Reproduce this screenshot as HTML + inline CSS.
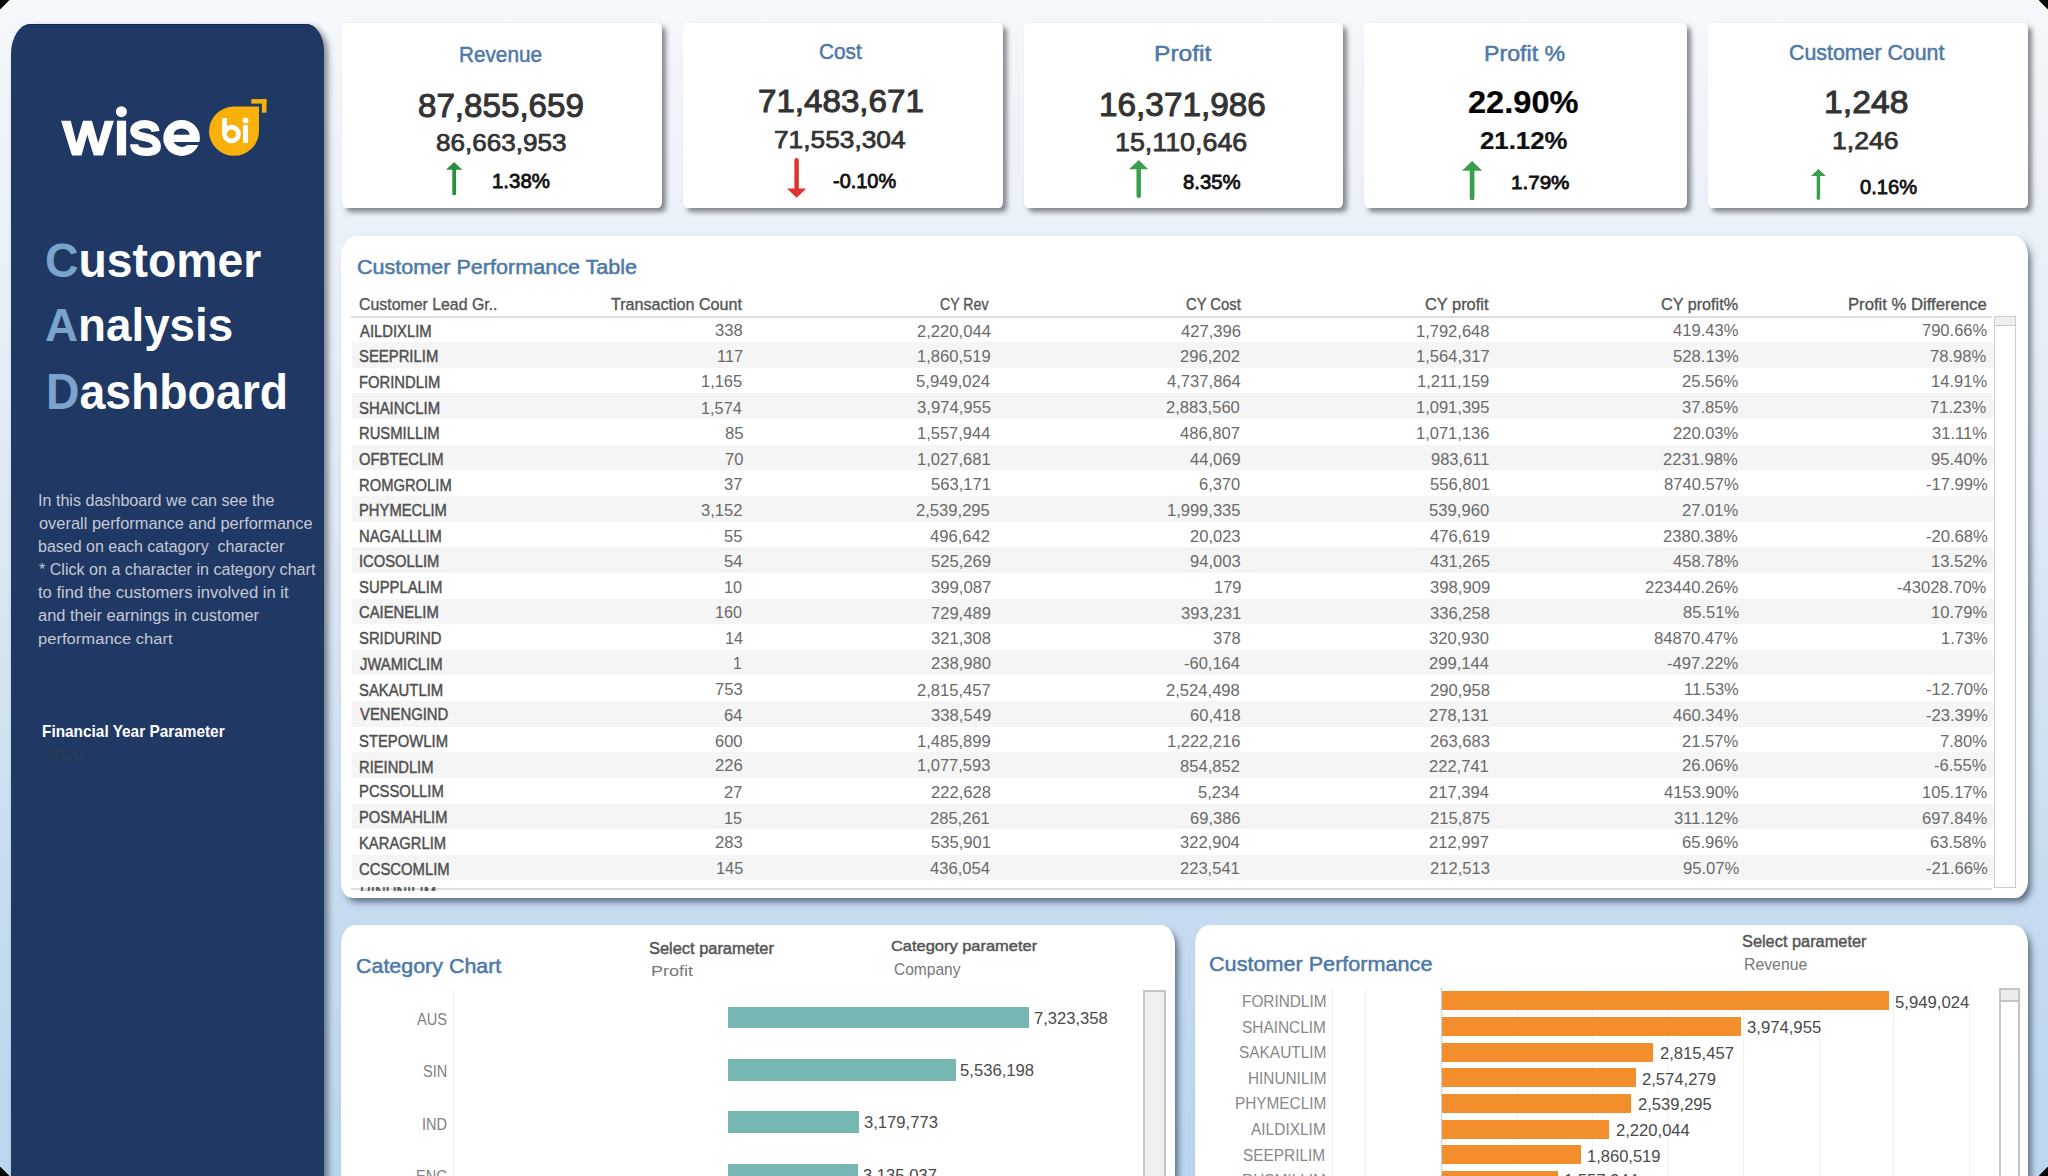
<!DOCTYPE html>
<html><head><meta charset="utf-8"><title>Customer Analysis Dashboard</title>
<style>
html,body{margin:0;padding:0;}
body{width:2048px;height:1176px;overflow:hidden;position:relative;font-family:"Liberation Sans",sans-serif;
background:linear-gradient(to bottom,#f5f8fc 0%,#eef3f9 12%,#e8eff8 25%,#d8e6f4 50%,#c6dbf0 77%,#bad5ee 100%);}
.a{position:absolute;}
.t{position:absolute;white-space:pre;line-height:1;transform-origin:0 0;}
</style></head><body>
<div class="a" style="left:11.00px;top:23.50px;width:312.50px;height:1200.00px;background:#203864;border-radius:20px 18px 0 0 / 30px 27px 0 0;box-shadow:4px 3px 6px rgba(0,0,0,0.45), inset 0 2px 1px -1px #102a58;"></div>
<svg class="a" style="left:0;top:0" width="330" height="200" viewBox="0 0 330 200">
<path fill="#fff" d="M61.1,120.7 L70.8,120.7 L76.4,142.9 L83,120.7 L91.9,120.7 L98.3,142.9 L104.7,120.7 L113.9,120.7 L102.9,155.4 L93.7,155.4 L87.3,134.7 L81.5,155.4 L72,155.4 Z"/>
<rect fill="#fff" x="116.9" y="120.7" width="9.2" height="34.7"/>
<circle fill="#fff" cx="121.4" cy="111.7" r="5.5"/>
<path fill="none" stroke="#fff" stroke-width="8.2" d="M155.6,131.6 C155,126.5 150.5,124.1 145.2,124.1 C139.2,124.1 134.3,126.6 134.3,130.6 C134.3,135.2 140,136.2 146,137.4 C152.5,138.7 156.8,140.8 156.8,146.4 C156.8,150.6 151.6,151.9 145.2,151.9 C138.8,151.9 134.2,149.6 134.2,144.2"/>
<ellipse fill="#fff" cx="181.6" cy="137.95" rx="18.3" ry="17.95"/>
<path fill="#203864" d="M173.5,134.8 A8.1,6.4 0 0 1 189.7,134.8 Z"/>
<path fill="#203864" d="M173.4,142 L200.5,142 L200.5,145.1 L187.3,145.1 C184.5,147.6 177.5,148.2 173.4,142 Z"/>
<path fill="#f7b10a" d="M259,106.6 L259,131.2 A25,24.6 0 1 1 234,106.6 Z"/>
<rect fill="#f7b10a" x="251.3" y="99.1" width="15.2" height="4.5"/>
<rect fill="#f7b10a" x="261.9" y="99.1" width="4.6" height="13.6"/>
<rect fill="#fff" x="222.2" y="118" width="4.7" height="16"/>
<circle fill="none" stroke="#fff" stroke-width="4.7" cx="231.5" cy="134" r="6.95"/>
<rect fill="#fff" x="243" y="125.1" width="5" height="17.7"/>
<circle fill="#fff" cx="245.5" cy="120.5" r="2.9"/>
</svg>
<div class="t" style="left:45.31px;top:236.64px;font-size:48.02px;font-weight:bold;color:#fff;transform:scaleX(0.9650);"><span style="color:#7ba4cd">C</span>ustomer</div>
<div class="t" style="left:44.86px;top:302.51px;font-size:45.34px;font-weight:bold;color:#fff;transform:scaleX(1.0090);"><span style="color:#7ba4cd">A</span>nalysis</div>
<div class="t" style="left:45.51px;top:366.83px;font-size:49.22px;font-weight:bold;color:#fff;transform:scaleX(0.9415);"><span style="color:#7ba4cd">D</span>ashboard</div>
<div class="t" style="left:37.77px;top:492.72px;font-size:15.57px;font-weight:normal;color:#c4c9d4;transform:scaleX(1.0350);">In this dashboard we can see the</div>
<div class="t" style="left:38.78px;top:515.96px;font-size:15.96px;font-weight:normal;color:#c4c9d4;transform:scaleX(1.0283);">overall performance and performance</div>
<div class="t" style="left:38.44px;top:538.86px;font-size:15.57px;font-weight:normal;color:#c4c9d4;transform:scaleX(1.0275);">based on each catagory &nbsp;character</div>
<div class="t" style="left:39.06px;top:561.93px;font-size:15.57px;font-weight:normal;color:#c4c9d4;transform:scaleX(1.0340);">* Click on a character in category chart</div>
<div class="t" style="left:38.29px;top:584.67px;font-size:15.96px;font-weight:normal;color:#c4c9d4;transform:scaleX(1.0431);">to find the customers involved in it</div>
<div class="t" style="left:38.14px;top:607.57px;font-size:15.57px;font-weight:normal;color:#c4c9d4;transform:scaleX(1.0561);">and their earnings in customer</div>
<div class="t" style="left:37.74px;top:631.80px;font-size:14.79px;font-weight:normal;color:#c4c9d4;transform:scaleX(1.1231);">performance chart</div>
<div class="t" style="left:41.61px;top:722.89px;font-size:16.31px;font-weight:bold;color:#fff;transform:scaleX(0.9436);">Financial Year Parameter</div>
<div class="t" style="left:44.72px;top:746.69px;font-size:16.91px;font-weight:normal;color:#2d3a52;transform:scaleX(0.9833);">2020</div>
<div class="a" style="left:342.00px;top:23.00px;width:320.00px;height:185.00px;background:#fff;border-radius:4px / 6px;box-shadow:4px 4px 5px rgba(60,64,70,0.6);"></div>
<div class="a" style="left:683.00px;top:23.00px;width:320.00px;height:185.00px;background:#fff;border-radius:4px / 6px;box-shadow:4px 4px 5px rgba(60,64,70,0.6);"></div>
<div class="a" style="left:1024.00px;top:23.00px;width:319.00px;height:185.00px;background:#fff;border-radius:4px / 6px;box-shadow:4px 4px 5px rgba(60,64,70,0.6);"></div>
<div class="a" style="left:1364.00px;top:23.00px;width:323.00px;height:185.00px;background:#fff;border-radius:4px / 6px;box-shadow:4px 4px 5px rgba(60,64,70,0.6);"></div>
<div class="a" style="left:1708.00px;top:23.00px;width:320.00px;height:185.00px;background:#fff;border-radius:4px / 6px;box-shadow:4px 4px 5px rgba(60,64,70,0.6);"></div>
<div class="t" style="left:459.13px;top:43.71px;font-size:21.84px;font-weight:normal;color:#4e79a7;transform:scaleX(0.9497);-webkit-text-stroke:0.5px #4e79a7;">Revenue</div>
<div class="t" style="left:417.69px;top:89.78px;font-size:32.86px;font-weight:normal;color:#333333;transform:scaleX(1.0089);-webkit-text-stroke:1.0px #333333;">87,855,659</div>
<div class="t" style="left:435.96px;top:130.81px;font-size:23.84px;font-weight:normal;color:#333333;transform:scaleX(1.0938);-webkit-text-stroke:0.75px #333333;">86,663,953</div>
<svg class="a" style="left:446.00px;top:161.60px" width="16.40" height="33.70" viewBox="0 0 16.40 33.70"><path d="M8.20,0 L16.40,7.87 L0,7.87 Z" fill="#28903c"/><line x1="8.20" y1="7.37" x2="8.20" y2="31.81" stroke="#28903c" stroke-width="3.77" stroke-linecap="round"/></svg>
<div class="t" style="left:492.39px;top:171.79px;font-size:19.86px;font-weight:normal;color:#111;transform:scaleX(1.0294);-webkit-text-stroke:0.8px #111;">1.38%</div>
<div class="t" style="left:819.21px;top:39.71px;font-size:22.67px;font-weight:normal;color:#4e79a7;transform:scaleX(0.9180);-webkit-text-stroke:0.5px #4e79a7;">Cost</div>
<div class="t" style="left:757.84px;top:86.73px;font-size:30.79px;font-weight:normal;color:#333333;transform:scaleX(1.0767);-webkit-text-stroke:1.0px #333333;">71,483,671</div>
<div class="t" style="left:774.01px;top:127.70px;font-size:24.09px;font-weight:normal;color:#333333;transform:scaleX(1.0916);-webkit-text-stroke:0.75px #333333;">71,553,304</div>
<svg class="a" style="left:786.50px;top:158.20px" width="19.20" height="39.80" viewBox="0 0 19.20 39.80"><path d="M9.60,39.80 L19.20,30.58 L0,30.58 Z" fill="#e0312f"/><line x1="9.60" y1="2.21" x2="9.60" y2="31.08" stroke="#e0312f" stroke-width="4.42" stroke-linecap="round"/></svg>
<div class="t" style="left:833.20px;top:170.86px;font-size:20.37px;font-weight:normal;color:#111;transform:scaleX(0.9796);-webkit-text-stroke:0.8px #111;">-0.10%</div>
<div class="t" style="left:1153.50px;top:43.86px;font-size:21.42px;font-weight:normal;color:#4e79a7;transform:scaleX(1.1485);-webkit-text-stroke:0.5px #4e79a7;">Profit</div>
<div class="t" style="left:1098.63px;top:87.66px;font-size:33.00px;font-weight:normal;color:#333333;transform:scaleX(1.0105);-webkit-text-stroke:1.0px #333333;">16,371,986</div>
<div class="t" style="left:1114.74px;top:128.64px;font-size:26.17px;font-weight:normal;color:#333333;transform:scaleX(1.0252);-webkit-text-stroke:0.75px #333333;">15,110,646</div>
<svg class="a" style="left:1128.60px;top:160.00px" width="19.40" height="38.00" viewBox="0 0 19.40 38.00"><path d="M9.70,0 L19.40,9.31 L0,9.31 Z" fill="#3a9e4c"/><line x1="9.70" y1="8.81" x2="9.70" y2="35.77" stroke="#3a9e4c" stroke-width="4.46" stroke-linecap="round"/></svg>
<div class="t" style="left:1183.19px;top:172.72px;font-size:19.35px;font-weight:normal;color:#111;transform:scaleX(1.0511);-webkit-text-stroke:0.8px #111;">8.35%</div>
<div class="t" style="left:1483.56px;top:43.86px;font-size:21.42px;font-weight:normal;color:#4e79a7;transform:scaleX(1.0830);-webkit-text-stroke:0.5px #4e79a7;">Profit %</div>
<div class="t" style="left:1468.15px;top:86.87px;font-size:30.62px;font-weight:bold;color:#000;transform:scaleX(1.0640);-webkit-text-stroke:0.2px #000;">22.90%</div>
<div class="t" style="left:1479.68px;top:129.89px;font-size:23.16px;font-weight:bold;color:#111;transform:scaleX(1.1129);-webkit-text-stroke:0.2px #111;">21.12%</div>
<svg class="a" style="left:1461.50px;top:161.00px" width="20.20" height="39.40" viewBox="0 0 20.20 39.40"><path d="M10.10,0 L20.20,9.70 L0,9.70 Z" fill="#3a9e4c"/><line x1="10.10" y1="9.20" x2="10.10" y2="37.08" stroke="#3a9e4c" stroke-width="4.65" stroke-linecap="round"/></svg>
<div class="t" style="left:1511.03px;top:173.74px;font-size:18.26px;font-weight:normal;color:#111;transform:scaleX(1.1292);-webkit-text-stroke:0.8px #111;">1.79%</div>
<div class="t" style="left:1789.08px;top:42.98px;font-size:21.28px;font-weight:normal;color:#4e79a7;transform:scaleX(1.0037);-webkit-text-stroke:0.5px #4e79a7;">Customer Count</div>
<div class="t" style="left:1824.06px;top:85.67px;font-size:32.16px;font-weight:normal;color:#333333;transform:scaleX(1.0493);-webkit-text-stroke:1.0px #333333;">1,248</div>
<div class="t" style="left:1832.14px;top:128.87px;font-size:24.25px;font-weight:normal;color:#333333;transform:scaleX(1.0981);-webkit-text-stroke:0.75px #333333;">1,246</div>
<svg class="a" style="left:1811.20px;top:169.00px" width="14.80" height="30.90" viewBox="0 0 14.80 30.90"><path d="M7.40,0 L14.80,7.10 L0,7.10 Z" fill="#3a9e4c"/><line x1="7.40" y1="6.60" x2="7.40" y2="29.20" stroke="#3a9e4c" stroke-width="3.40" stroke-linecap="round"/></svg>
<div class="t" style="left:1859.64px;top:176.56px;font-size:20.83px;font-weight:normal;color:#111;transform:scaleX(0.9660);-webkit-text-stroke:0.8px #111;">0.16%</div>
<div class="a" style="left:341.00px;top:236.00px;width:1687.00px;height:661.50px;background:#fff;border-radius:15px 14px 13px 11px / 22px 20px 18px 15px;box-shadow:4px 5px 6px -1px rgba(30,45,65,0.62);"></div>
<div class="t" style="left:356.67px;top:257.60px;font-size:19.72px;font-weight:normal;color:#4e79a7;transform:scaleX(1.0945);-webkit-text-stroke:0.5px #4e79a7;">Customer Performance Table</div>
<div class="a" style="left:351.50px;top:342.23px;width:1641.00px;height:25.63px;background:#f5f5f5;"></div>
<div class="a" style="left:351.50px;top:393.49px;width:1641.00px;height:25.63px;background:#f5f5f5;"></div>
<div class="a" style="left:351.50px;top:444.75px;width:1641.00px;height:25.63px;background:#f5f5f5;"></div>
<div class="a" style="left:351.50px;top:496.01px;width:1641.00px;height:25.63px;background:#f5f5f5;"></div>
<div class="a" style="left:351.50px;top:547.27px;width:1641.00px;height:25.63px;background:#f5f5f5;"></div>
<div class="a" style="left:351.50px;top:598.53px;width:1641.00px;height:25.63px;background:#f5f5f5;"></div>
<div class="a" style="left:351.50px;top:649.79px;width:1641.00px;height:25.63px;background:#f5f5f5;"></div>
<div class="a" style="left:351.50px;top:701.05px;width:1641.00px;height:25.63px;background:#f5f5f5;"></div>
<div class="a" style="left:351.50px;top:752.31px;width:1641.00px;height:25.63px;background:#f5f5f5;"></div>
<div class="a" style="left:351.50px;top:803.57px;width:1641.00px;height:25.63px;background:#f5f5f5;"></div>
<div class="a" style="left:351.50px;top:854.83px;width:1641.00px;height:25.63px;background:#f5f5f5;"></div>
<div class="a" style="left:351.00px;top:316.30px;width:1641.00px;height:1.50px;background:#dddddd;"></div>
<div class="a" style="left:351.00px;top:888.20px;width:1641.00px;height:1.80px;background:#dcdcdc;"></div>
<div class="a" style="left:1994.20px;top:315.80px;width:21.70px;height:572.70px;border:1.2px solid #cccccc;background:#fff;box-sizing:border-box;"></div>
<div class="a" style="left:1995.40px;top:317.00px;width:19.30px;height:9.40px;background:#efefef;border-bottom:1.2px solid #c8c8c8;box-sizing:border-box;"></div>
<div class="t" style="left:359.22px;top:296.77px;font-size:15.62px;font-weight:normal;color:#555555;transform:scaleX(1.0168);-webkit-text-stroke:0.35px #555555;">Customer Lead Gr..</div>
<div class="t" style="left:611.04px;top:296.77px;font-size:15.62px;font-weight:normal;color:#555555;transform:scaleX(1.0313);-webkit-text-stroke:0.35px #555555;">Transaction Count</div>
<div class="t" style="left:940.46px;top:295.93px;font-size:16.03px;font-weight:normal;color:#555555;transform:scaleX(0.8830);-webkit-text-stroke:0.35px #555555;">CY Rev</div>
<div class="t" style="left:1186.28px;top:295.93px;font-size:16.03px;font-weight:normal;color:#555555;transform:scaleX(0.9225);-webkit-text-stroke:0.35px #555555;">CY Cost</div>
<div class="t" style="left:1425.12px;top:295.93px;font-size:16.03px;font-weight:normal;color:#555555;transform:scaleX(1.0236);-webkit-text-stroke:0.35px #555555;">CY profit</div>
<div class="t" style="left:1660.94px;top:296.73px;font-size:16.85px;font-weight:normal;color:#555555;transform:scaleX(0.9610);-webkit-text-stroke:0.35px #555555;">CY profit%</div>
<div class="t" style="left:1847.79px;top:296.77px;font-size:15.62px;font-weight:normal;color:#555555;transform:scaleX(1.0683);-webkit-text-stroke:0.35px #555555;">Profit % Difference</div>
<div class="t" style="left:360.20px;top:322.50px;font-size:16.30px;font-weight:normal;color:#505050;transform:scaleX(0.9097);-webkit-text-stroke:0.45px #505050;">AILDIXLIM</div>
<div class="t" style="left:714.68px;top:321.73px;font-size:17.21px;font-weight:normal;color:#6a6a6a;transform:scaleX(0.9656);">338</div>
<div class="t" style="left:916.77px;top:322.73px;font-size:17.21px;font-weight:normal;color:#6a6a6a;transform:scaleX(0.9664);">2,220,044</div>
<div class="t" style="left:1180.94px;top:322.73px;font-size:17.21px;font-weight:normal;color:#6a6a6a;transform:scaleX(0.9668);">427,396</div>
<div class="t" style="left:1415.99px;top:322.73px;font-size:17.21px;font-weight:normal;color:#6a6a6a;transform:scaleX(0.9601);">1,792,648</div>
<div class="t" style="left:1672.89px;top:321.73px;font-size:17.21px;font-weight:normal;color:#6a6a6a;transform:scaleX(0.9634);">419.43%</div>
<div class="t" style="left:1921.57px;top:321.73px;font-size:17.21px;font-weight:normal;color:#6a6a6a;transform:scaleX(0.9610);">790.66%</div>
<div class="t" style="left:358.90px;top:347.63px;font-size:16.30px;font-weight:normal;color:#505050;transform:scaleX(0.9126);-webkit-text-stroke:0.45px #505050;">SEEPRILIM</div>
<div class="t" style="left:716.65px;top:347.86px;font-size:17.21px;font-weight:normal;color:#6a6a6a;transform:scaleX(0.9518);">117</div>
<div class="t" style="left:917.18px;top:347.86px;font-size:17.21px;font-weight:normal;color:#6a6a6a;transform:scaleX(0.9633);">1,860,519</div>
<div class="t" style="left:1180.38px;top:347.86px;font-size:17.21px;font-weight:normal;color:#6a6a6a;transform:scaleX(0.9634);">296,202</div>
<div class="t" style="left:1416.33px;top:347.86px;font-size:17.21px;font-weight:normal;color:#6a6a6a;transform:scaleX(0.9628);">1,564,317</div>
<div class="t" style="left:1672.56px;top:347.86px;font-size:17.21px;font-weight:normal;color:#6a6a6a;transform:scaleX(0.9682);">528.13%</div>
<div class="t" style="left:1930.32px;top:347.86px;font-size:17.21px;font-weight:normal;color:#6a6a6a;transform:scaleX(0.9666);">78.98%</div>
<div class="t" style="left:358.97px;top:373.76px;font-size:16.30px;font-weight:normal;color:#505050;transform:scaleX(0.9080);-webkit-text-stroke:0.45px #505050;">FORINDLIM</div>
<div class="t" style="left:700.99px;top:373.49px;font-size:17.21px;font-weight:normal;color:#6a6a6a;transform:scaleX(0.9559);">1,165</div>
<div class="t" style="left:916.27px;top:373.49px;font-size:17.21px;font-weight:normal;color:#6a6a6a;transform:scaleX(0.9696);">5,949,024</div>
<div class="t" style="left:1166.62px;top:373.49px;font-size:17.21px;font-weight:normal;color:#6a6a6a;transform:scaleX(0.9653);">4,737,864</div>
<div class="t" style="left:1416.92px;top:373.49px;font-size:17.21px;font-weight:normal;color:#6a6a6a;transform:scaleX(0.9614);">1,211,159</div>
<div class="t" style="left:1681.80px;top:373.49px;font-size:17.21px;font-weight:normal;color:#6a6a6a;transform:scaleX(0.9669);">25.56%</div>
<div class="t" style="left:1930.82px;top:373.49px;font-size:17.21px;font-weight:normal;color:#6a6a6a;transform:scaleX(0.9623);">14.91%</div>
<div class="t" style="left:358.89px;top:399.89px;font-size:16.30px;font-weight:normal;color:#505050;transform:scaleX(0.9141);-webkit-text-stroke:0.45px #505050;">SHAINCLIM</div>
<div class="t" style="left:701.34px;top:399.62px;font-size:17.21px;font-weight:normal;color:#6a6a6a;transform:scaleX(0.9503);">1,574</div>
<div class="t" style="left:917.01px;top:398.62px;font-size:17.21px;font-weight:normal;color:#6a6a6a;transform:scaleX(0.9681);">3,974,955</div>
<div class="t" style="left:1166.26px;top:398.62px;font-size:17.21px;font-weight:normal;color:#6a6a6a;transform:scaleX(0.9659);">2,883,560</div>
<div class="t" style="left:1415.94px;top:398.62px;font-size:17.21px;font-weight:normal;color:#6a6a6a;transform:scaleX(0.9603);">1,091,395</div>
<div class="t" style="left:1682.42px;top:398.62px;font-size:17.21px;font-weight:normal;color:#6a6a6a;transform:scaleX(0.9652);">37.85%</div>
<div class="t" style="left:1930.32px;top:398.62px;font-size:17.21px;font-weight:normal;color:#6a6a6a;transform:scaleX(0.9666);">71.23%</div>
<div class="t" style="left:358.97px;top:424.52px;font-size:16.30px;font-weight:normal;color:#505050;transform:scaleX(0.9087);-webkit-text-stroke:0.45px #505050;">RUSMILLIM</div>
<div class="t" style="left:724.60px;top:424.75px;font-size:17.21px;font-weight:normal;color:#6a6a6a;transform:scaleX(0.9700);">85</div>
<div class="t" style="left:917.29px;top:424.75px;font-size:17.21px;font-weight:normal;color:#6a6a6a;transform:scaleX(0.9599);">1,557,944</div>
<div class="t" style="left:1180.24px;top:424.75px;font-size:17.21px;font-weight:normal;color:#6a6a6a;transform:scaleX(0.9657);">486,807</div>
<div class="t" style="left:1416.04px;top:424.75px;font-size:17.21px;font-weight:normal;color:#6a6a6a;transform:scaleX(0.9600);">1,071,136</div>
<div class="t" style="left:1673.04px;top:424.75px;font-size:17.21px;font-weight:normal;color:#6a6a6a;transform:scaleX(0.9614);">220.03%</div>
<div class="t" style="left:1931.61px;top:424.75px;font-size:17.21px;font-weight:normal;color:#6a6a6a;transform:scaleX(0.9624);">31.11%</div>
<div class="t" style="left:359.06px;top:450.65px;font-size:16.30px;font-weight:normal;color:#505050;transform:scaleX(0.9091);-webkit-text-stroke:0.45px #505050;">OFBTECLIM</div>
<div class="t" style="left:724.62px;top:450.88px;font-size:17.21px;font-weight:normal;color:#6a6a6a;transform:scaleX(0.9643);">70</div>
<div class="t" style="left:917.28px;top:450.88px;font-size:17.21px;font-weight:normal;color:#6a6a6a;transform:scaleX(0.9625);">1,027,681</div>
<div class="t" style="left:1189.85px;top:450.88px;font-size:17.21px;font-weight:normal;color:#6a6a6a;transform:scaleX(0.9623);">44,069</div>
<div class="t" style="left:1431.02px;top:450.88px;font-size:17.21px;font-weight:normal;color:#6a6a6a;transform:scaleX(0.9608);">983,611</div>
<div class="t" style="left:1663.33px;top:450.88px;font-size:17.21px;font-weight:normal;color:#6a6a6a;transform:scaleX(0.9640);">2231.98%</div>
<div class="t" style="left:1931.25px;top:450.88px;font-size:17.21px;font-weight:normal;color:#6a6a6a;transform:scaleX(0.9676);">95.40%</div>
<div class="t" style="left:358.97px;top:476.78px;font-size:16.30px;font-weight:normal;color:#505050;transform:scaleX(0.9071);-webkit-text-stroke:0.45px #505050;">ROMGROLIM</div>
<div class="t" style="left:723.77px;top:475.51px;font-size:17.21px;font-weight:normal;color:#6a6a6a;transform:scaleX(0.9562);">37</div>
<div class="t" style="left:930.84px;top:475.51px;font-size:17.21px;font-weight:normal;color:#6a6a6a;transform:scaleX(0.9671);">563,171</div>
<div class="t" style="left:1199.30px;top:475.51px;font-size:17.21px;font-weight:normal;color:#6a6a6a;transform:scaleX(0.9569);">6,370</div>
<div class="t" style="left:1429.84px;top:475.51px;font-size:17.21px;font-weight:normal;color:#6a6a6a;transform:scaleX(0.9671);">556,801</div>
<div class="t" style="left:1664.19px;top:475.51px;font-size:17.21px;font-weight:normal;color:#6a6a6a;transform:scaleX(0.9656);">8740.57%</div>
<div class="t" style="left:1925.60px;top:475.51px;font-size:17.21px;font-weight:normal;color:#6a6a6a;transform:scaleX(0.9664);">-17.99%</div>
<div class="t" style="left:358.97px;top:501.91px;font-size:16.30px;font-weight:normal;color:#505050;transform:scaleX(0.9075);-webkit-text-stroke:0.45px #505050;">PHYMECLIM</div>
<div class="t" style="left:701.48px;top:501.64px;font-size:17.21px;font-weight:normal;color:#6a6a6a;transform:scaleX(0.9639);">3,152</div>
<div class="t" style="left:916.41px;top:501.64px;font-size:17.21px;font-weight:normal;color:#6a6a6a;transform:scaleX(0.9656);">2,539,295</div>
<div class="t" style="left:1166.94px;top:501.64px;font-size:17.21px;font-weight:normal;color:#6a6a6a;transform:scaleX(0.9603);">1,999,335</div>
<div class="t" style="left:1429.34px;top:501.64px;font-size:17.21px;font-weight:normal;color:#6a6a6a;transform:scaleX(0.9682);">539,960</div>
<div class="t" style="left:1681.80px;top:501.64px;font-size:17.21px;font-weight:normal;color:#6a6a6a;transform:scaleX(0.9669);">27.01%</div>
<div class="t" style="left:358.97px;top:527.54px;font-size:16.30px;font-weight:normal;color:#505050;transform:scaleX(0.9068);-webkit-text-stroke:0.45px #505050;">NAGALLLIM</div>
<div class="t" style="left:724.28px;top:527.77px;font-size:17.21px;font-weight:normal;color:#6a6a6a;transform:scaleX(0.9559);">55</div>
<div class="t" style="left:930.24px;top:527.77px;font-size:17.21px;font-weight:normal;color:#6a6a6a;transform:scaleX(0.9657);">496,642</div>
<div class="t" style="left:1189.85px;top:527.77px;font-size:17.21px;font-weight:normal;color:#6a6a6a;transform:scaleX(0.9612);">20,023</div>
<div class="t" style="left:1430.09px;top:527.77px;font-size:17.21px;font-weight:normal;color:#6a6a6a;transform:scaleX(0.9657);">476,619</div>
<div class="t" style="left:1663.33px;top:527.77px;font-size:17.21px;font-weight:normal;color:#6a6a6a;transform:scaleX(0.9640);">2380.38%</div>
<div class="t" style="left:1925.60px;top:527.77px;font-size:17.21px;font-weight:normal;color:#6a6a6a;transform:scaleX(0.9664);">-20.68%</div>
<div class="t" style="left:358.73px;top:552.67px;font-size:16.30px;font-weight:normal;color:#505050;transform:scaleX(0.9067);-webkit-text-stroke:0.45px #505050;">ICOSOLLIM</div>
<div class="t" style="left:723.62px;top:552.90px;font-size:17.21px;font-weight:normal;color:#6a6a6a;transform:scaleX(0.9671);">54</div>
<div class="t" style="left:930.74px;top:552.90px;font-size:17.21px;font-weight:normal;color:#6a6a6a;transform:scaleX(0.9677);">525,269</div>
<div class="t" style="left:1189.80px;top:552.90px;font-size:17.21px;font-weight:normal;color:#6a6a6a;transform:scaleX(0.9621);">94,003</div>
<div class="t" style="left:1429.84px;top:552.90px;font-size:17.21px;font-weight:normal;color:#6a6a6a;transform:scaleX(0.9666);">431,265</div>
<div class="t" style="left:1672.89px;top:552.90px;font-size:17.21px;font-weight:normal;color:#6a6a6a;transform:scaleX(0.9634);">458.78%</div>
<div class="t" style="left:1930.82px;top:552.90px;font-size:17.21px;font-weight:normal;color:#6a6a6a;transform:scaleX(0.9623);">13.52%</div>
<div class="t" style="left:358.90px;top:578.80px;font-size:16.30px;font-weight:normal;color:#505050;transform:scaleX(0.9120);-webkit-text-stroke:0.45px #505050;">SUPPLALIM</div>
<div class="t" style="left:724.13px;top:578.53px;font-size:17.21px;font-weight:normal;color:#6a6a6a;transform:scaleX(0.9427);">10</div>
<div class="t" style="left:930.98px;top:578.53px;font-size:17.21px;font-weight:normal;color:#6a6a6a;transform:scaleX(0.9693);">399,087</div>
<div class="t" style="left:1213.80px;top:578.53px;font-size:17.21px;font-weight:normal;color:#6a6a6a;transform:scaleX(0.9569);">179</div>
<div class="t" style="left:1429.83px;top:578.53px;font-size:17.21px;font-weight:normal;color:#6a6a6a;transform:scaleX(0.9696);">398,909</div>
<div class="t" style="left:1644.90px;top:578.53px;font-size:17.21px;font-weight:normal;color:#6a6a6a;transform:scaleX(0.9656);">223440.26%</div>
<div class="t" style="left:1897.41px;top:578.53px;font-size:17.21px;font-weight:normal;color:#6a6a6a;transform:scaleX(0.9637);">-43028.70%</div>
<div class="t" style="left:358.94px;top:604.43px;font-size:16.30px;font-weight:normal;color:#505050;transform:scaleX(0.9090);-webkit-text-stroke:0.45px #505050;">CAIENELIM</div>
<div class="t" style="left:715.42px;top:603.66px;font-size:17.21px;font-weight:normal;color:#6a6a6a;transform:scaleX(0.9392);">160</div>
<div class="t" style="left:931.26px;top:604.66px;font-size:17.21px;font-weight:normal;color:#6a6a6a;transform:scaleX(0.9631);">729,489</div>
<div class="t" style="left:1180.93px;top:604.66px;font-size:17.21px;font-weight:normal;color:#6a6a6a;transform:scaleX(0.9687);">393,231</div>
<div class="t" style="left:1429.66px;top:604.66px;font-size:17.21px;font-weight:normal;color:#6a6a6a;transform:scaleX(0.9665);">336,258</div>
<div class="t" style="left:1682.66px;top:603.66px;font-size:17.21px;font-weight:normal;color:#6a6a6a;transform:scaleX(0.9630);">85.51%</div>
<div class="t" style="left:1930.82px;top:603.66px;font-size:17.21px;font-weight:normal;color:#6a6a6a;transform:scaleX(0.9623);">10.79%</div>
<div class="t" style="left:358.90px;top:629.56px;font-size:16.30px;font-weight:normal;color:#505050;transform:scaleX(0.9108);-webkit-text-stroke:0.45px #505050;">SRIDURIND</div>
<div class="t" style="left:724.63px;top:629.79px;font-size:17.21px;font-weight:normal;color:#6a6a6a;transform:scaleX(0.9452);">14</div>
<div class="t" style="left:930.66px;top:629.79px;font-size:17.21px;font-weight:normal;color:#6a6a6a;transform:scaleX(0.9665);">321,308</div>
<div class="t" style="left:1212.68px;top:629.79px;font-size:17.21px;font-weight:normal;color:#6a6a6a;transform:scaleX(0.9656);">378</div>
<div class="t" style="left:1429.43px;top:629.79px;font-size:17.21px;font-weight:normal;color:#6a6a6a;transform:scaleX(0.9670);">320,930</div>
<div class="t" style="left:1654.47px;top:629.79px;font-size:17.21px;font-weight:normal;color:#6a6a6a;transform:scaleX(0.9665);">84870.47%</div>
<div class="t" style="left:1940.53px;top:629.79px;font-size:17.21px;font-weight:normal;color:#6a6a6a;transform:scaleX(0.9603);">1.73%</div>
<div class="t" style="left:359.86px;top:655.69px;font-size:16.30px;font-weight:normal;color:#505050;transform:scaleX(0.9091);-webkit-text-stroke:0.45px #505050;">JWAMICLIM</div>
<div class="t" style="left:733.39px;top:655.42px;font-size:17.21px;font-weight:normal;color:#6a6a6a;transform:scaleX(0.9107);">1</div>
<div class="t" style="left:930.84px;top:655.42px;font-size:17.21px;font-weight:normal;color:#6a6a6a;transform:scaleX(0.9645);">238,980</div>
<div class="t" style="left:1184.40px;top:655.42px;font-size:17.21px;font-weight:normal;color:#6a6a6a;transform:scaleX(0.9589);">-60,164</div>
<div class="t" style="left:1429.34px;top:655.42px;font-size:17.21px;font-weight:normal;color:#6a6a6a;transform:scaleX(0.9641);">299,144</div>
<div class="t" style="left:1667.33px;top:655.42px;font-size:17.21px;font-weight:normal;color:#6a6a6a;transform:scaleX(0.9677);">-497.22%</div>
<div class="t" style="left:358.90px;top:681.82px;font-size:16.30px;font-weight:normal;color:#505050;transform:scaleX(0.9118);-webkit-text-stroke:0.45px #505050;">SAKAUTLIM</div>
<div class="t" style="left:715.15px;top:680.55px;font-size:17.21px;font-weight:normal;color:#6a6a6a;transform:scaleX(0.9660);">753</div>
<div class="t" style="left:916.81px;top:681.55px;font-size:17.21px;font-weight:normal;color:#6a6a6a;transform:scaleX(0.9637);">2,815,457</div>
<div class="t" style="left:1166.46px;top:681.55px;font-size:17.21px;font-weight:normal;color:#6a6a6a;transform:scaleX(0.9656);">2,524,498</div>
<div class="t" style="left:1430.03px;top:681.55px;font-size:17.21px;font-weight:normal;color:#6a6a6a;transform:scaleX(0.9646);">290,958</div>
<div class="t" style="left:1684.01px;top:680.55px;font-size:17.21px;font-weight:normal;color:#6a6a6a;transform:scaleX(0.9614);">11.53%</div>
<div class="t" style="left:1925.60px;top:680.55px;font-size:17.21px;font-weight:normal;color:#6a6a6a;transform:scaleX(0.9664);">-12.70%</div>
<div class="t" style="left:360.11px;top:706.45px;font-size:16.30px;font-weight:normal;color:#505050;transform:scaleX(0.9117);-webkit-text-stroke:0.45px #505050;">VENENGIND</div>
<div class="t" style="left:724.08px;top:706.68px;font-size:17.21px;font-weight:normal;color:#6a6a6a;transform:scaleX(0.9682);">64</div>
<div class="t" style="left:930.83px;top:706.68px;font-size:17.21px;font-weight:normal;color:#6a6a6a;transform:scaleX(0.9696);">338,549</div>
<div class="t" style="left:1189.76px;top:706.68px;font-size:17.21px;font-weight:normal;color:#6a6a6a;transform:scaleX(0.9623);">60,418</div>
<div class="t" style="left:1429.34px;top:706.68px;font-size:17.21px;font-weight:normal;color:#6a6a6a;transform:scaleX(0.9627);">278,131</div>
<div class="t" style="left:1672.89px;top:706.68px;font-size:17.21px;font-weight:normal;color:#6a6a6a;transform:scaleX(0.9634);">460.34%</div>
<div class="t" style="left:1925.60px;top:706.68px;font-size:17.21px;font-weight:normal;color:#6a6a6a;transform:scaleX(0.9664);">-23.39%</div>
<div class="t" style="left:358.90px;top:732.58px;font-size:16.30px;font-weight:normal;color:#505050;transform:scaleX(0.9112);-webkit-text-stroke:0.45px #505050;">STEPOWLIM</div>
<div class="t" style="left:714.87px;top:732.81px;font-size:17.21px;font-weight:normal;color:#6a6a6a;transform:scaleX(0.9577);">600</div>
<div class="t" style="left:917.18px;top:732.81px;font-size:17.21px;font-weight:normal;color:#6a6a6a;transform:scaleX(0.9633);">1,485,899</div>
<div class="t" style="left:1167.04px;top:732.81px;font-size:17.21px;font-weight:normal;color:#6a6a6a;transform:scaleX(0.9600);">1,222,216</div>
<div class="t" style="left:1430.08px;top:732.81px;font-size:17.21px;font-weight:normal;color:#6a6a6a;transform:scaleX(0.9645);">263,683</div>
<div class="t" style="left:1681.80px;top:732.81px;font-size:17.21px;font-weight:normal;color:#6a6a6a;transform:scaleX(0.9669);">21.57%</div>
<div class="t" style="left:1940.03px;top:732.81px;font-size:17.21px;font-weight:normal;color:#6a6a6a;transform:scaleX(0.9654);">7.80%</div>
<div class="t" style="left:358.98px;top:758.71px;font-size:16.30px;font-weight:normal;color:#505050;transform:scaleX(0.9043);-webkit-text-stroke:0.45px #505050;">RIEINDLIM</div>
<div class="t" style="left:715.13px;top:757.44px;font-size:17.21px;font-weight:normal;color:#6a6a6a;transform:scaleX(0.9670);">226</div>
<div class="t" style="left:917.04px;top:757.44px;font-size:17.21px;font-weight:normal;color:#6a6a6a;transform:scaleX(0.9600);">1,077,593</div>
<div class="t" style="left:1180.24px;top:758.44px;font-size:17.21px;font-weight:normal;color:#6a6a6a;transform:scaleX(0.9656);">854,852</div>
<div class="t" style="left:1429.34px;top:758.44px;font-size:17.21px;font-weight:normal;color:#6a6a6a;transform:scaleX(0.9627);">222,741</div>
<div class="t" style="left:1681.80px;top:757.44px;font-size:17.21px;font-weight:normal;color:#6a6a6a;transform:scaleX(0.9669);">26.06%</div>
<div class="t" style="left:1934.31px;top:757.44px;font-size:17.21px;font-weight:normal;color:#6a6a6a;transform:scaleX(0.9637);">-6.55%</div>
<div class="t" style="left:358.97px;top:783.34px;font-size:16.30px;font-weight:normal;color:#505050;transform:scaleX(0.9102);-webkit-text-stroke:0.45px #505050;">PCSSOLLIM</div>
<div class="t" style="left:724.15px;top:783.57px;font-size:17.21px;font-weight:normal;color:#6a6a6a;transform:scaleX(0.9569);">27</div>
<div class="t" style="left:931.03px;top:783.57px;font-size:17.21px;font-weight:normal;color:#6a6a6a;transform:scaleX(0.9646);">222,628</div>
<div class="t" style="left:1198.32px;top:783.57px;font-size:17.21px;font-weight:normal;color:#6a6a6a;transform:scaleX(0.9666);">5,234</div>
<div class="t" style="left:1429.34px;top:783.57px;font-size:17.21px;font-weight:normal;color:#6a6a6a;transform:scaleX(0.9641);">217,394</div>
<div class="t" style="left:1664.18px;top:783.57px;font-size:17.21px;font-weight:normal;color:#6a6a6a;transform:scaleX(0.9657);">4153.90%</div>
<div class="t" style="left:1922.06px;top:783.57px;font-size:17.21px;font-weight:normal;color:#6a6a6a;transform:scaleX(0.9612);">105.17%</div>
<div class="t" style="left:358.98px;top:809.47px;font-size:16.30px;font-weight:normal;color:#505050;transform:scaleX(0.9056);-webkit-text-stroke:0.45px #505050;">POSMAHLIM</div>
<div class="t" style="left:724.28px;top:809.70px;font-size:17.21px;font-weight:normal;color:#6a6a6a;transform:scaleX(0.9415);">15</div>
<div class="t" style="left:930.34px;top:809.70px;font-size:17.21px;font-weight:normal;color:#6a6a6a;transform:scaleX(0.9627);">285,261</div>
<div class="t" style="left:1189.81px;top:809.70px;font-size:17.21px;font-weight:normal;color:#6a6a6a;transform:scaleX(0.9618);">69,386</div>
<div class="t" style="left:1429.99px;top:809.70px;font-size:17.21px;font-weight:normal;color:#6a6a6a;transform:scaleX(0.9643);">215,875</div>
<div class="t" style="left:1674.40px;top:809.70px;font-size:17.21px;font-weight:normal;color:#6a6a6a;transform:scaleX(0.9656);">311.12%</div>
<div class="t" style="left:1921.50px;top:809.70px;font-size:17.21px;font-weight:normal;color:#6a6a6a;transform:scaleX(0.9618);">697.84%</div>
<div class="t" style="left:358.97px;top:834.60px;font-size:16.30px;font-weight:normal;color:#505050;transform:scaleX(0.9079);-webkit-text-stroke:0.45px #505050;">KARAGRLIM</div>
<div class="t" style="left:715.13px;top:834.33px;font-size:17.21px;font-weight:normal;color:#6a6a6a;transform:scaleX(0.9670);">283</div>
<div class="t" style="left:930.84px;top:834.33px;font-size:17.21px;font-weight:normal;color:#6a6a6a;transform:scaleX(0.9671);">535,901</div>
<div class="t" style="left:1179.94px;top:834.33px;font-size:17.21px;font-weight:normal;color:#6a6a6a;transform:scaleX(0.9627);">322,904</div>
<div class="t" style="left:1429.38px;top:834.33px;font-size:17.21px;font-weight:normal;color:#6a6a6a;transform:scaleX(0.9634);">212,997</div>
<div class="t" style="left:1681.76px;top:834.33px;font-size:17.21px;font-weight:normal;color:#6a6a6a;transform:scaleX(0.9673);">65.96%</div>
<div class="t" style="left:1930.26px;top:834.33px;font-size:17.21px;font-weight:normal;color:#6a6a6a;transform:scaleX(0.9673);">63.58%</div>
<div class="t" style="left:358.94px;top:860.73px;font-size:16.30px;font-weight:normal;color:#505050;transform:scaleX(0.9113);-webkit-text-stroke:0.45px #505050;">CCSCOMLIM</div>
<div class="t" style="left:715.56px;top:860.46px;font-size:17.21px;font-weight:normal;color:#6a6a6a;transform:scaleX(0.9505);">145</div>
<div class="t" style="left:930.19px;top:860.46px;font-size:17.21px;font-weight:normal;color:#6a6a6a;transform:scaleX(0.9665);">436,054</div>
<div class="t" style="left:1180.34px;top:860.46px;font-size:17.21px;font-weight:normal;color:#6a6a6a;transform:scaleX(0.9627);">223,541</div>
<div class="t" style="left:1430.08px;top:860.46px;font-size:17.21px;font-weight:normal;color:#6a6a6a;transform:scaleX(0.9645);">212,513</div>
<div class="t" style="left:1682.75px;top:860.46px;font-size:17.21px;font-weight:normal;color:#6a6a6a;transform:scaleX(0.9676);">95.07%</div>
<div class="t" style="left:1925.60px;top:860.46px;font-size:17.21px;font-weight:normal;color:#6a6a6a;transform:scaleX(0.9664);">-21.66%</div>
<div class="a" style="left:351px;top:886.8px;width:1641px;height:4.2px;overflow:hidden">
<div class="t" style="left:9px;top:-2.60px;font-size:16.30px;color:#505050;transform:scaleX(0.9140);-webkit-text-stroke:0.45px #505050;">HINUNILIM</div>
</div>
<div class="a" style="left:341.00px;top:925.00px;width:833.50px;height:300.00px;background:#fff;border-radius:14px 14px 0 0 / 20px 20px 0 0;box-shadow:4px 5px 6px -1px rgba(30,45,65,0.62);"></div>
<div class="t" style="left:355.98px;top:955.85px;font-size:20.37px;font-weight:normal;color:#4e79a7;transform:scaleX(1.0526);-webkit-text-stroke:0.5px #4e79a7;">Category Chart</div>
<div class="t" style="left:649.15px;top:940.65px;font-size:15.89px;font-weight:normal;color:#555;transform:scaleX(1.0334);-webkit-text-stroke:0.45px #555;">Select parameter</div>
<div class="t" style="left:650.86px;top:963.51px;font-size:14.75px;font-weight:normal;color:#777;transform:scaleX(1.2238);">Profit</div>
<div class="t" style="left:891.46px;top:937.54px;font-size:15.42px;font-weight:normal;color:#555;transform:scaleX(1.0665);-webkit-text-stroke:0.45px #555;">Category parameter</div>
<div class="t" style="left:893.72px;top:961.71px;font-size:16.76px;font-weight:normal;color:#777;transform:scaleX(0.9280);">Company</div>
<div class="a" style="left:452.50px;top:990.00px;width:1.00px;height:200.00px;background:#f0f0f0;"></div>
<div class="a" style="left:728.10px;top:1006.60px;width:301.10px;height:21.80px;background:#76b7b2;"></div>
<div class="a" style="left:728.10px;top:1059.00px;width:227.60px;height:21.80px;background:#76b7b2;"></div>
<div class="a" style="left:728.10px;top:1111.40px;width:131.00px;height:21.80px;background:#76b7b2;"></div>
<div class="a" style="left:728.10px;top:1163.80px;width:129.70px;height:21.80px;background:#76b7b2;"></div>
<div class="t" style="left:417.09px;top:1010.63px;font-size:16.15px;font-weight:normal;color:#808080;transform:scaleX(0.9074);">AUS</div>
<div class="t" style="left:1033.65px;top:1009.78px;font-size:16.21px;font-weight:normal;color:#4a4a4a;transform:scaleX(1.0247);">7,323,358</div>
<div class="t" style="left:422.85px;top:1062.58px;font-size:16.15px;font-weight:normal;color:#808080;transform:scaleX(0.8987);">SIN</div>
<div class="t" style="left:960.21px;top:1061.73px;font-size:16.21px;font-weight:normal;color:#4a4a4a;transform:scaleX(1.0286);">5,536,198</div>
<div class="t" style="left:422.17px;top:1115.53px;font-size:16.15px;font-weight:normal;color:#808080;transform:scaleX(0.9015);">IND</div>
<div class="t" style="left:863.58px;top:1113.68px;font-size:16.21px;font-weight:normal;color:#4a4a4a;transform:scaleX(1.0275);">3,179,773</div>
<div class="t" style="left:415.68px;top:1167.98px;font-size:16.15px;font-weight:normal;color:#808080;transform:scaleX(0.9004);">ENG</div>
<div class="t" style="left:862.67px;top:1166.63px;font-size:16.21px;font-weight:normal;color:#4a4a4a;transform:scaleX(1.0258);">3,135,037</div>
<div class="a" style="left:1143.40px;top:989.80px;width:22.20px;height:300.00px;background:#efefef;border:2px solid #c4c4c4;box-sizing:border-box;"></div>
<div class="a" style="left:1195.00px;top:925.00px;width:833.00px;height:300.00px;background:#fff;border-radius:14px 14px 0 0 / 20px 20px 0 0;box-shadow:4px 5px 6px -1px rgba(30,45,65,0.62);"></div>
<div class="t" style="left:1208.54px;top:953.71px;font-size:20.18px;font-weight:normal;color:#4e79a7;transform:scaleX(1.0716);-webkit-text-stroke:0.5px #4e79a7;">Customer Performance</div>
<div class="t" style="left:1742.32px;top:933.53px;font-size:16.85px;font-weight:normal;color:#555;transform:scaleX(0.9703);-webkit-text-stroke:0.45px #555;">Select parameter</div>
<div class="t" style="left:1743.76px;top:956.51px;font-size:16.88px;font-weight:normal;color:#777;transform:scaleX(0.9370);">Revenue</div>
<div class="a" style="left:1332.00px;top:988.00px;width:1.20px;height:200.00px;background:#eeeeee;"></div>
<div class="a" style="left:1365.20px;top:988.00px;width:1.00px;height:200.00px;background:#f2f2f2;"></div>
<div class="a" style="left:1517.00px;top:988.00px;width:1.00px;height:200.00px;background:#f2f2f2;"></div>
<div class="a" style="left:1592.00px;top:988.00px;width:1.00px;height:200.00px;background:#f2f2f2;"></div>
<div class="a" style="left:1667.40px;top:988.00px;width:1.00px;height:200.00px;background:#f2f2f2;"></div>
<div class="a" style="left:1742.90px;top:988.00px;width:1.00px;height:200.00px;background:#f2f2f2;"></div>
<div class="a" style="left:1818.70px;top:988.00px;width:1.00px;height:200.00px;background:#f2f2f2;"></div>
<div class="a" style="left:1893.30px;top:988.00px;width:1.00px;height:200.00px;background:#f2f2f2;"></div>
<div class="a" style="left:1969.20px;top:988.00px;width:1.00px;height:200.00px;background:#f2f2f2;"></div>
<div class="a" style="left:1440.60px;top:988.00px;width:1.00px;height:200.00px;border-left:1px dotted #b0b0b0;"></div>
<div class="a" style="left:1441.50px;top:991.40px;width:447.20px;height:19.00px;background:#f28e2b;"></div>
<div class="t" style="left:1241.61px;top:992.70px;font-size:16.30px;font-weight:normal;color:#888;transform:scaleX(0.9430);">FORINDLIM</div>
<div class="t" style="left:1895.19px;top:993.93px;font-size:17.21px;font-weight:normal;color:#4a4a4a;transform:scaleX(0.9716);">5,949,024</div>
<div class="a" style="left:1441.50px;top:1017.03px;width:299.20px;height:19.00px;background:#f28e2b;"></div>
<div class="t" style="left:1242.31px;top:1018.83px;font-size:16.30px;font-weight:normal;color:#888;transform:scaleX(0.9457);">SHAINCLIM</div>
<div class="t" style="left:1747.40px;top:1018.56px;font-size:17.21px;font-weight:normal;color:#4a4a4a;transform:scaleX(0.9704);">3,974,955</div>
<div class="a" style="left:1441.50px;top:1042.66px;width:211.50px;height:19.00px;background:#f28e2b;"></div>
<div class="t" style="left:1238.99px;top:1043.96px;font-size:16.30px;font-weight:normal;color:#888;transform:scaleX(0.9477);">SAKAUTLIM</div>
<div class="t" style="left:1660.08px;top:1044.69px;font-size:17.21px;font-weight:normal;color:#4a4a4a;transform:scaleX(0.9666);">2,815,457</div>
<div class="a" style="left:1441.50px;top:1068.29px;width:194.10px;height:19.00px;background:#f28e2b;"></div>
<div class="t" style="left:1247.61px;top:1069.59px;font-size:16.30px;font-weight:normal;color:#888;transform:scaleX(0.9429);">HINUNILIM</div>
<div class="t" style="left:1641.88px;top:1070.82px;font-size:17.21px;font-weight:normal;color:#4a4a4a;transform:scaleX(0.9670);">2,574,279</div>
<div class="a" style="left:1441.50px;top:1093.92px;width:189.90px;height:19.00px;background:#f28e2b;"></div>
<div class="t" style="left:1235.02px;top:1094.72px;font-size:16.30px;font-weight:normal;color:#888;transform:scaleX(0.9427);">PHYMECLIM</div>
<div class="t" style="left:1638.28px;top:1095.95px;font-size:17.21px;font-weight:normal;color:#4a4a4a;transform:scaleX(0.9656);">2,539,295</div>
<div class="a" style="left:1441.50px;top:1119.55px;width:167.50px;height:19.00px;background:#f28e2b;"></div>
<div class="t" style="left:1251.26px;top:1120.85px;font-size:16.30px;font-weight:normal;color:#888;transform:scaleX(0.9499);">AILDIXLIM</div>
<div class="t" style="left:1616.08px;top:1121.58px;font-size:17.21px;font-weight:normal;color:#4a4a4a;transform:scaleX(0.9655);">2,220,044</div>
<div class="a" style="left:1441.50px;top:1145.18px;width:139.00px;height:19.00px;background:#f28e2b;"></div>
<div class="t" style="left:1243.40px;top:1146.98px;font-size:16.30px;font-weight:normal;color:#888;transform:scaleX(0.9459);">SEEPRILIM</div>
<div class="t" style="left:1586.81px;top:1147.71px;font-size:17.21px;font-weight:normal;color:#4a4a4a;transform:scaleX(0.9604);">1,860,519</div>
<div class="a" style="left:1441.50px;top:1170.81px;width:116.50px;height:19.00px;background:#f28e2b;"></div>
<div class="t" style="left:1242.18px;top:1172.11px;font-size:16.30px;font-weight:normal;color:#888;transform:scaleX(0.9464);">RUSMILLIM</div>
<div class="t" style="left:1564.24px;top:1172.34px;font-size:17.21px;font-weight:normal;color:#4a4a4a;transform:scaleX(0.9671);">1,557,944</div>
<div class="a" style="left:1998.90px;top:987.60px;width:21.10px;height:300.00px;background:#fff;border:2px solid #c4c4c4;box-sizing:border-box;"></div>
<div class="a" style="left:2000.90px;top:989.60px;width:17.10px;height:10.50px;background:#ececec;border-bottom:2px solid #c4c4c4;"></div>
<div class="a" style="width:9.5px;height:9.5px;background:#000;left:0;top:0;clip-path:polygon(0 0,100% 0,0 100%);"></div>
<div class="a" style="width:9.5px;height:9.5px;background:#000;right:0;top:0;clip-path:polygon(0 0,100% 0,100% 100%);"></div>
<div class="a" style="width:9.5px;height:9.5px;background:#000;left:0;bottom:0;clip-path:polygon(0 0,100% 100%,0 100%);"></div>
<div class="a" style="width:9.5px;height:9.5px;background:#000;right:0;bottom:0;clip-path:polygon(100% 0,100% 100%,0 100%);"></div>
</body></html>
